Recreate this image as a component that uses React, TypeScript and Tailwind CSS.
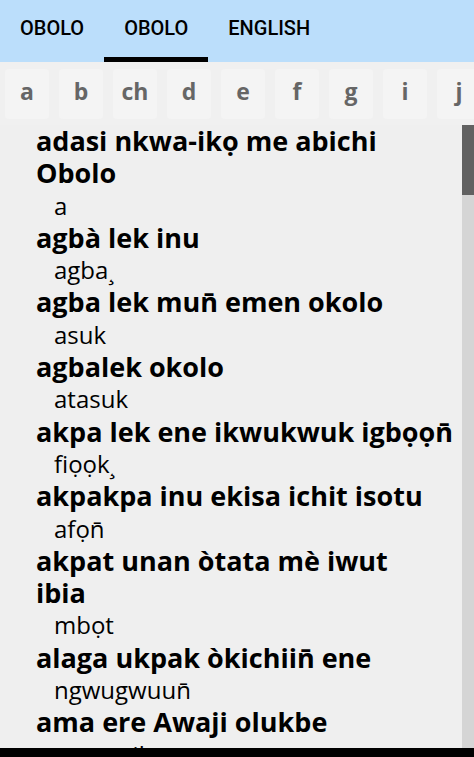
import React from "react";

const letters = ["a", "b", "ch", "d", "e", "f", "g", "i", "j"];

const entries = [
  { word: ["adasi nkwa-ikọ me abichi", "Obolo"], gloss: "a" },
  { word: ["agbà lek inu"], gloss: "agba¸" },
  { word: ["agba lek mun̄ emen okolo"], gloss: "asuk" },
  { word: ["agbalek okolo"], gloss: "atasuk" },
  { word: ["akpa lek ene ikwukwuk igbọọn̄"], gloss: "fiọọk¸" },
  { word: ["akpakpa inu ekisa ichit isotu"], gloss: "afọn̄" },
  { word: ["akpat unan òtata mè iwut", "ibia"], gloss: "mbọt" },
  { word: ["alaga ukpak òkichiin̄ ene"], gloss: "ngwugwuun̄" },
  { word: ["ama ere Awaji olukbe"], gloss: "awawuikọn̄" },
];

const Tabs = () => (
  <div className="flex h-[62px] shrink-0 bg-[#bbdefb] font-['Roboto',sans-serif] text-[20px] font-medium text-black">
    <div className="flex items-center border-b-[5px] border-transparent px-5 pb-[2px]">OBOLO</div>
    <div className="flex items-center border-b-[5px] border-black px-5 pb-[2px]">OBOLO</div>
    <div className="flex items-center border-b-[5px] border-transparent px-5 pb-[2px]">ENGLISH</div>
  </div>
);

const LetterBar = () => (
  <div className="flex h-[63px] shrink-0 items-center gap-[10px] overflow-hidden bg-[#f0f0f0] pl-[5px]">
    {letters.map((l) => (
      <div
        key={l}
        className="flex h-[50px] w-[44px] shrink-0 items-center justify-center rounded-sm bg-[#f4f4f4] pb-[4px] font-['Open_Sans',sans-serif] text-[23px] font-bold text-[#666]"
      >
        {l}
      </div>
    ))}
  </div>
);

const List = () => (
  <div className="flex min-h-0 flex-1 bg-[#efefef]">
    <div className="flex-1 overflow-hidden pl-[36px] font-['Open_Sans',sans-serif] text-black">
      {entries.map((e) => (
        <div key={e.word.join(" ")}>
          {e.word.map((line) => (
            <div key={line} className="whitespace-nowrap text-[27px] font-bold leading-[32.3px]">
              {line}
            </div>
          ))}
          <div className="whitespace-nowrap pl-[18px] text-[24px] leading-[32.3px]">{e.gloss}</div>
        </div>
      ))}
    </div>
    <div className="w-3 shrink-0 bg-[#d5d5d5]">
      <div className="h-[70px] bg-[#616161]" />
    </div>
  </div>
);

export default function App() {
  return (
    <div className="flex h-[757px] w-[474px] flex-col overflow-hidden">
      <Tabs />
      <LetterBar />
      <List />
      <div className="h-[9px] shrink-0 bg-black" />
    </div>
  );
}
